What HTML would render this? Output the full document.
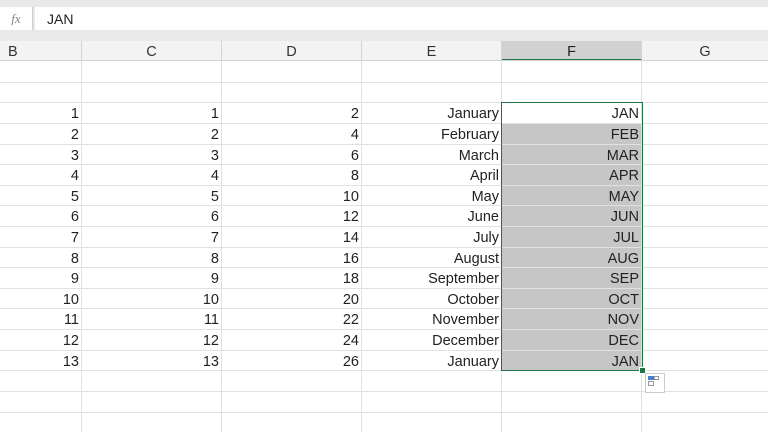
<!DOCTYPE html>
<html><head><style>
body{margin:0;width:768px;height:432px;overflow:hidden;background:#fff;font-family:"Liberation Sans",sans-serif;position:relative}
.a{position:absolute}
.c{position:absolute;height:20.6px;line-height:25px;text-align:right;font-size:14.5px;color:#222;box-sizing:border-box;padding-right:3px}
.h{position:absolute;top:41px;height:20px;line-height:22px;text-align:center;font-size:14.5px;color:#333;background:#f3f3f3;border-right:1px solid #d4d4d4;box-sizing:border-box}
.hl{position:absolute;left:0;width:768px;height:1px;background:#e1e1e1}
.vl{position:absolute;top:61px;height:371px;width:1px;background:#e1e1e1}
</style></head><body>
<div class="a" style="left:0;top:0;width:768px;height:41px;background:#e9e9e9"></div>
<div class="a" style="left:0;top:7px;width:32px;height:23px;background:#fff;border-right:1px solid #ccc;font-family:'Liberation Serif',serif;font-style:italic;color:#888;font-size:13px;line-height:23px;text-align:center">fx</div>
<div class="a" style="left:35px;top:7px;width:733px;height:23px;background:#fff;font-size:14px;line-height:24px;padding-left:12px;color:#222">JAN</div>
<div class="h" style="left:0;width:82px;text-align:left;padding-left:8px">B</div>
<div class="h" style="left:82px;width:140px">C</div>
<div class="h" style="left:222px;width:140px">D</div>
<div class="h" style="left:362px;width:140px">E</div>
<div class="h" style="left:502px;width:140px;background:#d2d2d2;border-bottom:2px solid #217346;color:#222">F</div>
<div class="h" style="left:642px;width:126px;border-right:none">G</div>
<div class="a" style="left:0;top:60px;width:768px;height:1px;background:#d4d4d4"></div>
<div class="a" style="left:502px;top:123px;width:140px;height:247px;background:#c6c6c6"></div>
<div class="hl" style="top:81.6px"></div><div class="hl" style="top:102.2px"></div><div class="hl" style="top:122.9px"></div><div class="hl" style="top:143.5px"></div><div class="hl" style="top:164.1px"></div><div class="hl" style="top:184.7px"></div><div class="hl" style="top:205.3px"></div><div class="hl" style="top:226px"></div><div class="hl" style="top:246.6px"></div><div class="hl" style="top:267.2px"></div><div class="hl" style="top:287.8px"></div><div class="hl" style="top:308.4px"></div><div class="hl" style="top:329.1px"></div><div class="hl" style="top:349.7px"></div><div class="hl" style="top:370.3px"></div><div class="hl" style="top:390.9px"></div><div class="hl" style="top:411.5px"></div>
<div class="vl" style="left:81px"></div><div class="vl" style="left:221px"></div><div class="vl" style="left:361px"></div><div class="vl" style="left:501px"></div><div class="vl" style="left:641px"></div>
<div class="a" style="left:501px;top:102px;width:140px;height:267px;border:1px solid #217346"></div>
<div class="a" style="left:639px;top:367px;width:5px;height:5px;background:#217346;border:1px solid #fff"></div>
<div class="a" style="left:645px;top:373px;width:18px;height:18px;border:1px solid #ccc;background:#fff"></div>
<div class="a" style="left:648px;top:376px;width:6px;height:4px;background:#4a7fd0"></div>
<div class="a" style="left:654px;top:376px;width:5px;height:4px;border:1px solid #999;box-sizing:border-box"></div>
<div class="a" style="left:648px;top:381px;width:6px;height:5px;border:1px solid #999;box-sizing:border-box"></div>
<div class="c" style="top:102.2px;left:0;width:82px">1</div><div class="c" style="top:102.2px;left:82px;width:140px">1</div><div class="c" style="top:102.2px;left:222px;width:140px">2</div><div class="c" style="top:102.2px;left:362px;width:140px">January</div><div class="c" style="top:102.2px;left:502px;width:140px">JAN</div>
<div class="c" style="top:122.9px;left:0;width:82px">2</div><div class="c" style="top:122.9px;left:82px;width:140px">2</div><div class="c" style="top:122.9px;left:222px;width:140px">4</div><div class="c" style="top:122.9px;left:362px;width:140px">February</div><div class="c" style="top:122.9px;left:502px;width:140px">FEB</div>
<div class="c" style="top:143.5px;left:0;width:82px">3</div><div class="c" style="top:143.5px;left:82px;width:140px">3</div><div class="c" style="top:143.5px;left:222px;width:140px">6</div><div class="c" style="top:143.5px;left:362px;width:140px">March</div><div class="c" style="top:143.5px;left:502px;width:140px">MAR</div>
<div class="c" style="top:164.1px;left:0;width:82px">4</div><div class="c" style="top:164.1px;left:82px;width:140px">4</div><div class="c" style="top:164.1px;left:222px;width:140px">8</div><div class="c" style="top:164.1px;left:362px;width:140px">April</div><div class="c" style="top:164.1px;left:502px;width:140px">APR</div>
<div class="c" style="top:184.7px;left:0;width:82px">5</div><div class="c" style="top:184.7px;left:82px;width:140px">5</div><div class="c" style="top:184.7px;left:222px;width:140px">10</div><div class="c" style="top:184.7px;left:362px;width:140px">May</div><div class="c" style="top:184.7px;left:502px;width:140px">MAY</div>
<div class="c" style="top:205.3px;left:0;width:82px">6</div><div class="c" style="top:205.3px;left:82px;width:140px">6</div><div class="c" style="top:205.3px;left:222px;width:140px">12</div><div class="c" style="top:205.3px;left:362px;width:140px">June</div><div class="c" style="top:205.3px;left:502px;width:140px">JUN</div>
<div class="c" style="top:226px;left:0;width:82px">7</div><div class="c" style="top:226px;left:82px;width:140px">7</div><div class="c" style="top:226px;left:222px;width:140px">14</div><div class="c" style="top:226px;left:362px;width:140px">July</div><div class="c" style="top:226px;left:502px;width:140px">JUL</div>
<div class="c" style="top:246.6px;left:0;width:82px">8</div><div class="c" style="top:246.6px;left:82px;width:140px">8</div><div class="c" style="top:246.6px;left:222px;width:140px">16</div><div class="c" style="top:246.6px;left:362px;width:140px">August</div><div class="c" style="top:246.6px;left:502px;width:140px">AUG</div>
<div class="c" style="top:267.2px;left:0;width:82px">9</div><div class="c" style="top:267.2px;left:82px;width:140px">9</div><div class="c" style="top:267.2px;left:222px;width:140px">18</div><div class="c" style="top:267.2px;left:362px;width:140px">September</div><div class="c" style="top:267.2px;left:502px;width:140px">SEP</div>
<div class="c" style="top:287.8px;left:0;width:82px">10</div><div class="c" style="top:287.8px;left:82px;width:140px">10</div><div class="c" style="top:287.8px;left:222px;width:140px">20</div><div class="c" style="top:287.8px;left:362px;width:140px">October</div><div class="c" style="top:287.8px;left:502px;width:140px">OCT</div>
<div class="c" style="top:308.4px;left:0;width:82px">11</div><div class="c" style="top:308.4px;left:82px;width:140px">11</div><div class="c" style="top:308.4px;left:222px;width:140px">22</div><div class="c" style="top:308.4px;left:362px;width:140px">November</div><div class="c" style="top:308.4px;left:502px;width:140px">NOV</div>
<div class="c" style="top:329.1px;left:0;width:82px">12</div><div class="c" style="top:329.1px;left:82px;width:140px">12</div><div class="c" style="top:329.1px;left:222px;width:140px">24</div><div class="c" style="top:329.1px;left:362px;width:140px">December</div><div class="c" style="top:329.1px;left:502px;width:140px">DEC</div>
<div class="c" style="top:349.7px;left:0;width:82px">13</div><div class="c" style="top:349.7px;left:82px;width:140px">13</div><div class="c" style="top:349.7px;left:222px;width:140px">26</div><div class="c" style="top:349.7px;left:362px;width:140px">January</div><div class="c" style="top:349.7px;left:502px;width:140px">JAN</div>
</body></html>
